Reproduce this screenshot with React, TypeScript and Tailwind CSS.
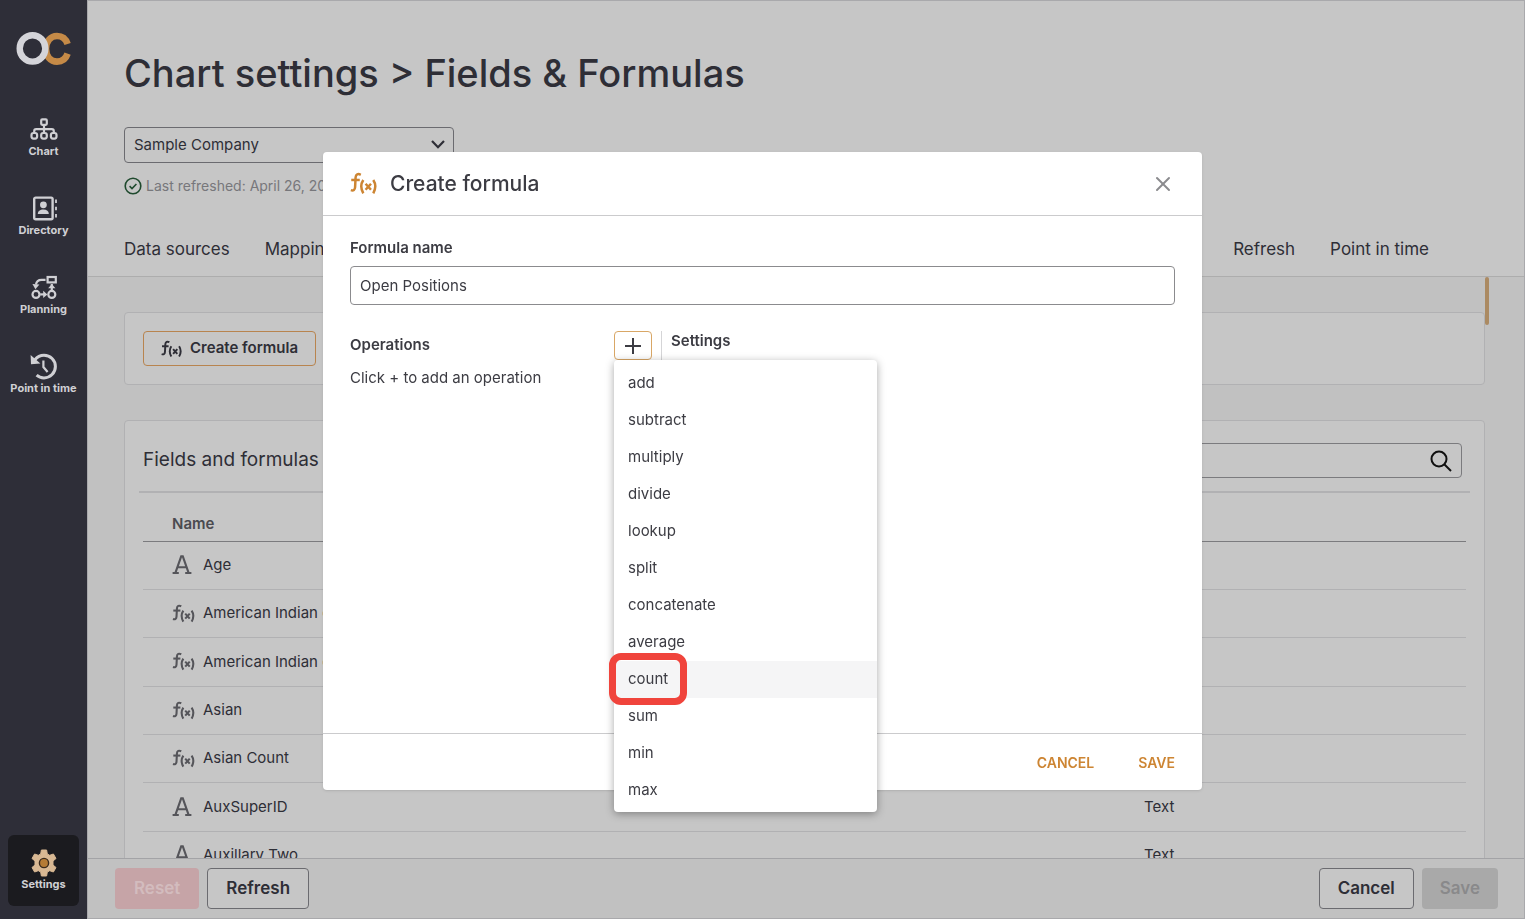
import type { ReactNode } from 'react';
import { X } from 'lucide-react';

const operations = [
  'add',
  'subtract',
  'multiply',
  'divide',
  'lookup',
  'split',
  'concatenate',
  'average',
  'count',
  'sum',
  'min',
  'max',
];

const fields = [
  { name: 'Age', kind: 'text', type: 'Text' },
  { name: 'American Indian or Alaskan', kind: 'formula', type: '' },
  { name: 'American Indian or Alaskan', kind: 'formula', type: '' },
  { name: 'Asian', kind: 'formula', type: '' },
  { name: 'Asian Count', kind: 'formula', type: '' },
  { name: 'AuxSuperID', kind: 'text', type: 'Text' },
  { name: 'Auxillary Two', kind: 'text', type: 'Text' },
];

function FormulaIcon({ className }: { className: string }) {
  return (
    <svg viewBox="0 0 26 22" fill="none" stroke="currentColor" strokeWidth="2.4" className={className} aria-hidden="true">
      <path d="M10.4 2.6C7.6 1.2 5.6 2.2 5.4 5L4.9 14.6C4.8 17 3.4 18.2 0.8 17.4" />
      <path d="M1.2 7.6H9.4" />
      <path d="M12.8 7.6C10.4 11.2 10.4 16.2 12.8 20.4M22.4 7.6C24.8 11.2 24.8 16.2 22.4 20.4" />
      <path d="M15 11.2L20.2 17M20.2 11.2L15 17" />
    </svg>
  );
}

function TextIcon() {
  return (
    <svg viewBox="0 0 20 20" fill="none" stroke="currentColor" strokeWidth="2.1" className="h-5 w-5" aria-hidden="true">
      <path d="M3.4 17.8L9.2 1.4H10.8L16.6 17.8M5.6 12.2H14.4" />
      <path d="M0.6 18H6.8M13.2 18H19.4" />
    </svg>
  );
}

function Logo() {
  return (
    <svg viewBox="0 0 56 34" fill="none" className="h-[34px] w-14" role="img" aria-label="OC">
      <path d="M51.6 12C50 7.2 46.4 4 41 4C34.5 4 30 9.2 30 16.8C30 24.4 34.5 29.6 41 29.6C46.4 29.6 50 26.4 51.6 21.6" stroke="#c58a47" strokeWidth="6.6" />
      <ellipse cx="16.5" cy="16.4" rx="12.8" ry="13.2" stroke="#d4d4d9" strokeWidth="6.4" />
    </svg>
  );
}

function ChartIcon() {
  return (
    <svg viewBox="0 0 28 24" fill="none" stroke="currentColor" strokeWidth="2.2" className="h-6 w-7" aria-hidden="true">
      <rect x="11.2" y="1.4" width="5.6" height="5.4" rx="1" />
      <path d="M14 7V15M4.2 14.5V13.4C4.2 12 5 11.2 6.2 11.2H21.800C23 11.2 23.800 12 23.800 13.4V14.500" />
      <rect x="1.500" y="15" width="5.600" height="5.600" rx="2" />
      <rect x="11.200" y="15" width="5.600" height="5.600" rx="2" />
      <rect x="20.900" y="15" width="5.600" height="5.600" rx="2" />
    </svg>
  );
}

function DirectoryIcon() {
  return (
    <svg viewBox="0 0 28 26" fill="none" stroke="currentColor" strokeWidth="2.400" className="h-[26px] w-7" aria-hidden="true">
      <rect x="4.200" y="1.600" width="18.400" height="21.600" rx="1.500" />
      <circle cx="13.400" cy="8.800" r="3.400" fill="currentColor" stroke="none" />
      <path d="M7.800 18C7.800 15 10 13.400 13.400 13.400C16.800 13.400 18.800 15 18.800 18Z" fill="currentColor" stroke="none" />
      <path d="M26 3.500V7M26 10.700V14.300M26 18V21.500" strokeWidth="1.800" />
    </svg>
  );
}

function PlanningIcon() {
  return (
    <svg viewBox="0 0 28 26" fill="none" stroke="currentColor" strokeWidth="2.200" className="h-[26px] w-7" aria-hidden="true">
      <rect x="17.600" y="2" width="8.200" height="5.400" />
      <path d="M15.500 4.800H11.500C8 4.800 6.400 6.600 6 9.500" />
      <path d="M2.400 9L9.400 9.600L5.400 14.200Z" fill="currentColor" stroke="none" />
      <circle cx="6" cy="19.400" r="3.500" />
      <circle cx="21.800" cy="19.400" r="3.500" />
      <path d="M21.800 9V15.500" />
      <path d="M18.200 13.200L21.800 9L25.400 13.200Z" fill="currentColor" stroke="none" />
      <path d="M10.200 19.400H14" />
      <path d="M13.200 15.800L17.400 19.400L13.200 23Z" fill="currentColor" stroke="none" />
    </svg>
  );
}

function HistoryIcon() {
  return (
    <svg viewBox="0 0 28 28" fill="none" stroke="currentColor" strokeWidth="3" className="h-7 w-7" aria-hidden="true">
      <path d="M5 6.6C7.200 3.800 10.400 2.200 14 2.200C20.300 2.200 25.400 7.200 25.400 13.500C25.400 19.800 20.300 24.900 14 24.900C11 24.900 8.600 24 6.600 22.200" />
      <path d="M0.600 2L1 11.200L10.400 10.600Z" fill="currentColor" stroke="none" />
      <path d="M13.400 7.600V14L17.600 19" strokeWidth="2.200" />
    </svg>
  );
}

function GearIcon() {
  return (
    <svg viewBox="0 0 28 28" className="h-7 w-7" aria-hidden="true">
      <path
        d="M11.4 1H16.6L17.3 4.9L19.7 6.3L23.4 5L26 9.5L23 12V16L26 18.5L23.4 23L19.7 21.7L17.3 23.1L16.6 27H11.4L10.7 23.1L8.3 21.7L4.6 23L2 18.5L5 16V12L2 9.5L4.6 5L8.3 6.3L10.7 4.9Z"
        fill="#d8b893"
        stroke="#d8b893"
        strokeLinejoin="round"
      />
      <circle cx="14" cy="14" r="4.6" fill="#b57b35" stroke="#3a2a1c" strokeWidth="1.4" />
    </svg>
  );
}

function NavItem({ label, icon, active }: { label: string; icon: ReactNode; active?: boolean }) {
  return (
    <a
      href="#"
      className={`flex h-[71px] w-[71px] flex-col items-center rounded-md pt-3.5 text-[11px] leading-[14px] font-bold whitespace-nowrap text-[#d0d0d4] ${
        active ? 'bg-[#1b1b1f]' : ''
      }`}
    >
      <span className="flex h-7 items-center">{icon}</span>
      {label}
    </a>
  );
}

export default function App() {
  return (
    <div className="flex h-screen overflow-hidden bg-[#c6c6c6] font-['Inter',sans-serif] text-[15px] text-[#2e2e36]">
      <aside className="flex w-[87px] shrink-0 flex-col items-center bg-[#2e2e38] pt-8 pb-[13px]">
        <Logo />
        <nav className="mt-9 flex flex-col gap-2">
          <NavItem label="Chart" icon={<ChartIcon />} />
          <NavItem label="Directory" icon={<DirectoryIcon />} />
          <NavItem label="Planning" icon={<PlanningIcon />} />
          <NavItem label="Point in time" icon={<HistoryIcon />} />
        </nav>
        <div className="mt-auto">
          <NavItem label="Settings" icon={<GearIcon />} active />
        </div>
      </aside>

      <div className="flex min-w-0 flex-1 flex-col border border-[#a9a9ac]">
        <header className="border-b border-[#adadad] px-9 pt-[47px]">
          <h1 className="text-[38px] leading-[50px] font-medium">Chart settings &gt; Fields &amp; Formulas</h1>
          <div className="relative mt-[29px] w-[330px]">
            <select
              aria-label="Company"
              className="h-9 w-full appearance-none rounded border border-[#6b6b70] bg-transparent px-[9px]"
            >
              <option>Sample Company</option>
            </select>
            <svg viewBox="0 0 14 9" fill="none" stroke="currentColor" strokeWidth="2.2" className="pointer-events-none absolute top-[13px] right-[9px] h-[9px] w-3.5">
              <path d="M1 1L7 7.2L13 1" />
            </svg>
          </div>
          <p className="mt-[11px] flex items-center gap-1 text-[14px] leading-6 text-[#77777b]">
            <svg viewBox="0 0 18 18" fill="none" stroke="#1f4a2e" strokeWidth="1.6" className="h-[18px] w-[18px]">
              <circle cx="9" cy="9" r="7.8" />
              <path d="M5.6 9.2L8 11.5L12.4 7" />
            </svg>
            Last refreshed: April 26, 2024
          </p>
          <nav className="mt-[39px] flex gap-[35px] pr-[59px] pb-[15px] text-[17px] leading-6">
            <a href="#">Data sources</a>
            <a href="#">Mapping</a>
            <a href="#" className="ml-auto">Refresh</a>
            <a href="#">Point in time</a>
          </nav>
        </header>

        <main className="relative min-h-0 flex-1 overflow-hidden bg-[#c1c1c1] pt-[35px] pr-[39px] pl-9">
          <div className="absolute top-0 right-[35px] h-12 w-1 rounded-full bg-[#ab8a62]" />
          <section className="rounded border border-[#b1b1b3] bg-[#c6c6c6] p-[18px]">
            <button className="flex h-[35px] items-center gap-2 rounded border border-[#b8844f] px-[17px] font-semibold">
              <FormulaIcon className="h-[18px] w-[21px]" />
              Create formula
            </button>
          </section>

          <section className="mt-[35px] rounded border border-[#b1b1b3] bg-[#c6c6c6] px-3.5 pt-[22px]">
            <div className="flex items-center justify-between border-b-2 border-[#b1b1b3] pr-2 pb-[13px] pl-1">
              <h2 className="text-[19px]">Fields and formulas</h2>
              <label className="flex h-[35px] w-[400px] items-center rounded border border-[#7b7b7e] pr-[9px]">
                <input type="search" aria-label="Search fields" className="min-w-0 flex-1 bg-transparent px-2 outline-none" />
                <svg viewBox="0 0 22 22" fill="none" stroke="#111" strokeWidth="2" className="h-[22px] w-[22px]">
                  <circle cx="9" cy="9" r="7.5" />
                  <path d="M14.5 14.5L21 21" />
                </svg>
              </label>
            </div>
            <div className="pr-1 pl-1">
              <table className="mt-2.5 h-[377px] w-full table-fixed text-left">
                <thead>
                  <tr className="h-[38px] border-b border-[#7b7b7e] text-[#4b4b50]">
                    <th className="pt-1 pl-[29px] font-semibold">Name</th>
                    <th className="w-[322px] font-semibold" aria-label="Type" />
                  </tr>
                </thead>
                <tbody>
                  {fields.map((field, i) => (
                    <tr key={i} className="border-b border-[#b1b1b3]">
                      <td className="pl-[29px]">
                        <span className="flex items-center gap-2">
                          <span className="flex w-[23px] text-[#55555a]">
                            {field.kind === 'text' ? <TextIcon /> : <FormulaIcon className="h-[19px] w-[23px]" />}
                          </span>
                          {field.name}
                        </span>
                      </td>
                      <td>{i > 4 && field.type}</td>
                    </tr>
                  ))}
                </tbody>
              </table>
            </div>
          </section>
        </main>

        <footer className="flex h-[60px] shrink-0 gap-2 border-t border-[#a3a3a6] bg-[#c1c1c1] pt-[9px] pr-[26px] pl-[27px] text-[17px] font-semibold">
          <button disabled className="h-[41px] rounded bg-[#c6a4a7] px-[19px] text-[#d3bcbe]">Reset</button>
          <button className="h-[41px] rounded border border-[#6b6b70] bg-[#c6c6c6] px-[18px]">Refresh</button>
          <button className="ml-auto h-[41px] rounded border border-[#6b6b70] bg-[#c6c6c6] px-[18px]">Cancel</button>
          <button disabled className="h-[41px] rounded bg-[#a9a9a9] px-[18px] text-[#89898b]">Save</button>
        </footer>
      </div>

      <div className="fixed inset-0 flex items-start justify-center pt-[152px]">
        <div role="dialog" aria-labelledby="dialog-title" className="w-[879px] rounded bg-white text-[#3c3c43] shadow-sm">
          <div className="flex h-16 items-center gap-[13px] border-b border-[#cbcbcd] px-[27px]">
            <FormulaIcon className="h-[23px] w-[27px] text-[#cd8533]" />
            <h2 id="dialog-title" className="text-[21px] font-medium">Create formula</h2>
            <button aria-label="Close" className="ml-auto text-[#8b8b8e]">
              <X className="h-6 w-6" />
            </button>
          </div>

          <div className="h-[517px] px-[27px] pt-5">
            <label htmlFor="formula-name" className="block leading-6 font-semibold">Formula name</label>
            <input
              id="formula-name"
              defaultValue="Open Positions"
              className="mt-1.5 h-[39px] w-full rounded border border-[#8b8b8e] px-[9px] outline-none"
            />
            <div className="mt-[26px] flex">
              <div className="w-[302px]">
                <div className="flex h-[29px] items-center justify-between">
                  <h3 className="font-semibold">Operations</h3>
                  <div className="relative">
                    <button aria-label="Add operation" className="flex h-[29px] w-[38px] items-center justify-center rounded border border-[#d9a766]">
                      <svg viewBox="0 0 16 16" stroke="currentColor" strokeWidth="2" className="h-4 w-4">
                        <path d="M8 0V16M0 8H16" />
                      </svg>
                    </button>
                    <ul role="menu" className="absolute top-[29px] left-0 z-10 w-[263px] rounded bg-white pt-[5px] pb-[3px] shadow-[0_2px_8px_rgba(0,0,0,0.35)]">
                      {operations.map((name) => (
                        <li key={name} role="none" className="relative">
                          <button
                            role="menuitem"
                            className={`block h-[37px] w-full px-3.5 text-left ${name === 'count' ? 'bg-[#f5f5f6]' : ''}`}
                          >
                            {name}
                          </button>
                          {name === 'count' && (
                            <span className="pointer-events-none absolute -top-2 -left-[5px] h-[52px] w-[78px] rounded-xl border-7 border-[#f0443c]" />
                          )}
                        </li>
                      ))}
                    </ul>
                  </div>
                </div>
                <p className="mt-1.5 leading-6">Click + to add an operation</p>
              </div>
              <div className="ml-[9px] h-[360px] border-l border-[#d5d5d7] pl-[9px]">
                <h3 className="leading-5 font-semibold">Settings</h3>
              </div>
            </div>
          </div>

          <div className="flex h-[57px] items-center justify-end gap-11 border-t border-[#cbcbcd] px-[27px] text-[14px] font-semibold text-[#cd8533]">
            <button>CANCEL</button>
            <button>SAVE</button>
          </div>
        </div>
      </div>
    </div>
  );
}
